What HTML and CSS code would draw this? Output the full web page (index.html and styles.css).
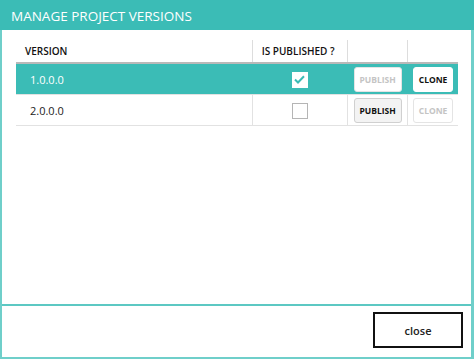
FILE: index.html
```html
<!DOCTYPE html>
<html lang="en">
<head>
<meta charset="UTF-8">
<title>Manage Project Versions</title>
<link rel="stylesheet" href="styles.css">
</head>
<body>
    <div class="dialog">
        <div class="dialog-title">MANAGE PROJECT VERSIONS</div>
        <div class="dialog-body">
            <table class="versions">
                <thead>
                    <tr>
                        <th class="col-version">VERSION</th>
                        <th class="col-published">IS PUBLISHED ?</th>
                        <th class="col-publish"></th>
                        <th class="col-clone"></th>
                    </tr>
                </thead>
                <tbody>
                    <tr class="selected">
                        <td class="version">1.0.0.0</td>
                        <td class="center"><span class="check checked">
                            <svg width="11" height="9" viewBox="0 0 11 9"><path d="M1 4.5 L4 7.5 L10 1.2" fill="none" stroke="#3bbcb6" stroke-width="2"/></svg>
                        </span></td>
                        <td class="center"><button class="btn" disabled>PUBLISH</button></td>
                        <td class="center"><button class="btn">CLONE</button></td>
                    </tr>
                    <tr>
                        <td class="version">2.0.0.0</td>
                        <td class="center"><span class="check"></span></td>
                        <td class="center"><button class="btn">PUBLISH</button></td>
                        <td class="center"><button class="btn" disabled>CLONE</button></td>
                    </tr>
                </tbody>
            </table>
        </div>
        <div class="dialog-footer">
            <button class="close-btn">close</button>
        </div>
    </div>
</body>
</html>
```
FILE: styles.css
```css
body {
    font-family: "Open Sans", Arial, sans-serif;
    margin: 0;
    padding: 0;
    background-color: #ffffff;
}

.dialog {
    width: 474px;
    height: 359px;
    box-sizing: border-box;
    border: 2px solid #6fcfca;
    border-top: none;
    border-right-width: 3px;
    display: flex;
    flex-direction: column;
}

.dialog-title {
    height: 30px;
    box-sizing: border-box;
    margin: 0 -3px 0 -2px;
    padding: 8px 0 0 11px;
    background-color: #3bbcb6;
    color: #ffffff;
    font-size: 13.5px;
    line-height: 16px;
}

.dialog-body {
    height: 274px;
    padding: 10px 0 0 14px;
    box-sizing: border-box;
}

.versions {
    width: 442px;
    border-collapse: collapse;
    font-size: 11px;
    color: #222222;
}

.versions th {
    height: 18px;
    padding: 0 0 4px 9px;
    text-align: left;
    font-size: 10px;
    font-weight: 600;
    color: #111111;
    border-left: 1px solid #dddddd;
    border-bottom: 2px solid #b9b9b9;
    vertical-align: bottom;
}

.versions th:first-child {
    border-left: none;
}

.col-version { width: 229px; }
.col-published { width: 86px; }
.col-publish { width: 50px; }
.col-clone { width: 41px; }

.versions td {
    height: 30px;
    padding: 0;
    border-left: 1px solid #e2e2e2;
    border-bottom: 1px solid #e2e2e2;
}

.versions td:first-child {
    border-left: none;
}

.versions td.version {
    padding-left: 14px;
}

.versions td.center {
    text-align: center;
}

.versions tr.selected td {
    background-color: #3bbcb6;
    color: #ffffff;
    border-left-color: #3bbcb6;
}

.check {
    display: inline-block;
    width: 14px;
    height: 14px;
    border: 1px solid #b5b5b5;
    background-color: #ffffff;
    vertical-align: middle;
    text-align: center;
    line-height: 12px;
}

.check.checked {
    border-color: #ffffff;
}

.check svg {
    vertical-align: middle;
}

.btn {
    font-family: "Open Sans", Arial, sans-serif;
    font-size: 8.5px;
    font-weight: 700;
    color: #111111;
    background-color: #f3f3f3;
    border: 1px solid #d0d0d0;
    border-radius: 3px;
    height: 25px;
    padding: 0 5px;
    vertical-align: middle;
}

.selected .btn {
    background-color: #ffffff;
    border-color: #ffffff;
}

.btn:disabled {
    color: #c4c4c4;
    background-color: #ffffff;
    border-color: #e4e4e4;
}

.dialog-footer {
    flex-grow: 1;
    border-top: 2px solid #5cc8c3;
    display: flex;
    justify-content: flex-end;
    align-items: flex-start;
    padding: 6px 8px 0 0;
}

.close-btn {
    font-family: "Open Sans", Arial, sans-serif;
    width: 90px;
    height: 36px;
    background-color: #ffffff;
    border: 2px solid #111111;
    font-size: 11px;
    font-weight: 600;
    color: #222222;
}
```
